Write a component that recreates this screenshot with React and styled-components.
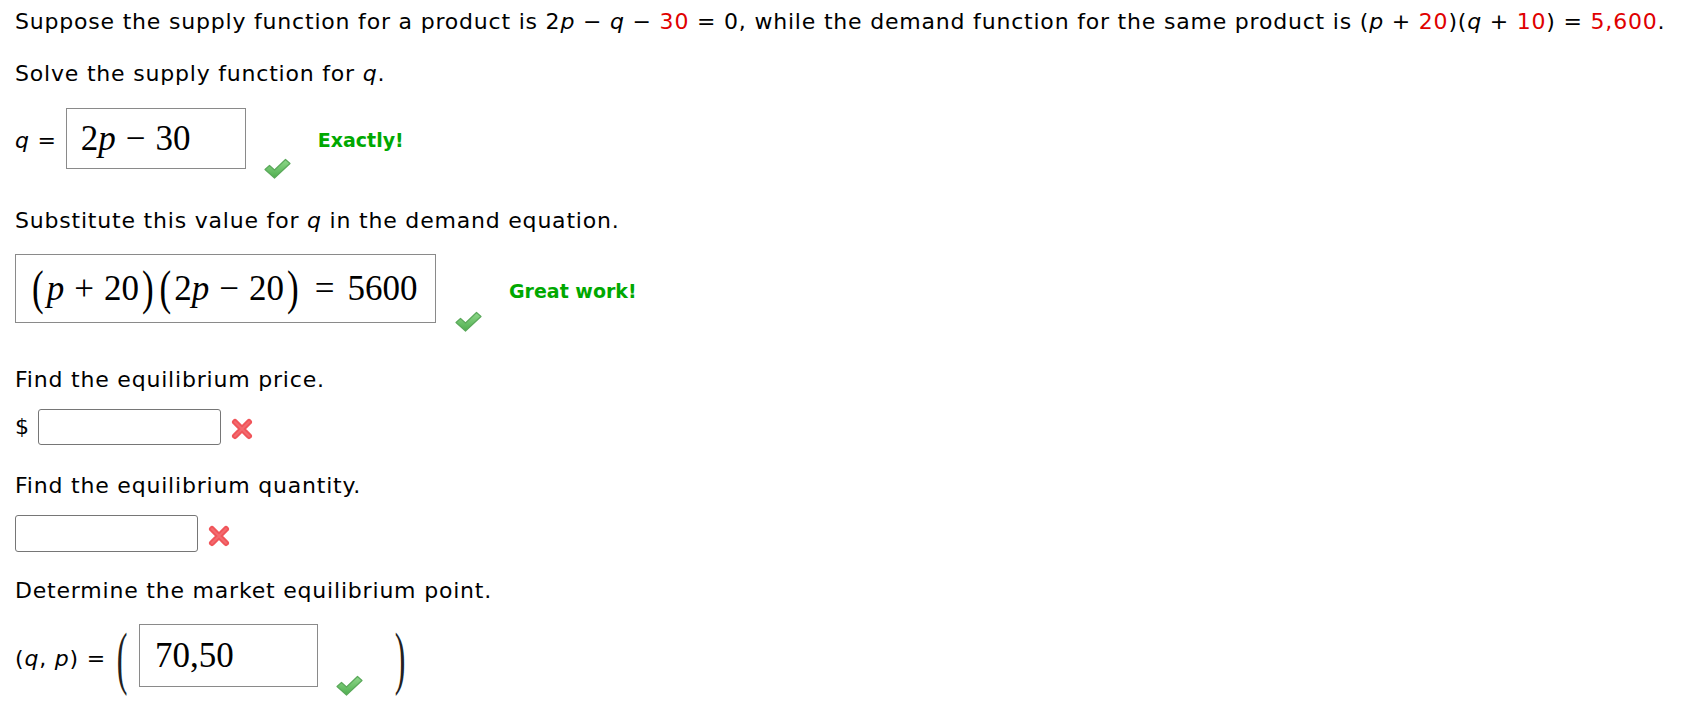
import React from 'react';
import styled, { createGlobalStyle } from 'styled-components';

const GlobalStyle = createGlobalStyle`
    html, body {
        margin:0;
        padding:0;
        background:#fff;
    }
    body {
        font-family:"DejaVu Sans", Verdana, sans-serif;
        color:#000;
    }
`;

const Page = styled.div`
    width:1704px;
    height:716px;
    padding:9px 15px 0;
    box-sizing:border-box;
    overflow:hidden;
`;

const Para = styled.div`
    font-size:22px;
    letter-spacing:0.8px;
    line-height:26px;
    margin-top:${p => p.$top || 0}px;
    white-space:nowrap;
`;

const Red = styled.span`
    color:#e00000;
`;

const Var = styled.i`
    font-style:italic;
`;

const Row = styled.div`
    display:flex;
    align-items:flex-start;
    height:${p => p.$h}px;
    margin-top:${p => p.$top || 0}px;
`;

const Label = styled.span`
    font-size:22px;
    letter-spacing:0.8px;
    line-height:26px;
    margin-top:${p => p.$top || 0}px;
    margin-right:${p => p.$gap || 0}px;
    white-space:nowrap;
`;

const MathBox = styled.div`
    width:${p => p.$w}px;
    height:${p => p.$h}px;
    flex-shrink:0;
    box-sizing:border-box;
    border:1px solid #8a8a8a;
    padding:0 ${p => p.$pad || 14}px;
    display:flex;
    align-items:center;
    font-family:"Liberation Serif", "DejaVu Serif", serif;
    font-size:35px;
    white-space:nowrap;
`;

const MathVar = styled.span`
    font-style:italic;
`;

const Op = styled.span`
    padding:0 ${p => p.$sp || 10}px;
`;

const Delim = styled.span`
    display:inline-block;
    padding:0 3px;
    transform:scaleY(1.4);
`;

const Icon = styled.span`
    display:inline-flex;
    flex-shrink:0;
    margin-top:${p => p.$top || 0}px;
    margin-left:${p => p.$left || 0}px;
`;

const Feedback = styled.span`
    color:#00a800;
    font-weight:bold;
    font-size:19px;
    line-height:26px;
    white-space:nowrap;
    margin-top:${p => p.$top || 0}px;
    margin-left:${p => p.$left || 0}px;
`;

const Input = styled.div`
    width:${p => p.$w}px;
    height:${p => p.$h}px;
    flex-shrink:0;
    box-sizing:border-box;
    border:1px solid #767676;
    border-radius:3px;
    background:#fff;
`;

const BigParen = styled.span`
    display:inline-block;
    flex-shrink:0;
    width:16px;
    text-align:center;
    font-family:"Liberation Serif", serif;
    font-size:40px;
    line-height:40px;
    color:#222;
    transform:scale(0.8, 1.75);
    transform-origin:center top;
    margin-top:${p => p.$top || 0}px;
    margin-left:${p => p.$left || 0}px;
    margin-right:${p => p.$right || 0}px;
`;

const Check = ({ id, top, left }) => (
    <Icon $top={top} $left={left}>
        <svg width="29" height="23" viewBox="0 0 29 23">
            <defs>
                <linearGradient id={id} x1="0" y1="0" x2="0" y2="1">
                    <stop offset="0" stopColor="#8fd88a" />
                    <stop offset="1" stopColor="#4fae4f" />
                </linearGradient>
            </defs>
            <path
                d="M2 12.5 L6.5 8.5 L11.5 13 L22.5 2.5 L27 6.5 L11.5 21 Z"
                fill={`url(#${id})`}
                stroke="#5aa85a"
                strokeWidth="1.2"
                strokeLinejoin="round"
            />
        </svg>
    </Icon>
);

const Cross = ({ top, left }) => (
    <Icon $top={top} $left={left}>
        <svg width="24" height="24" viewBox="0 0 24 24">
            <path d="M5 5 L19 19 M19 5 L5 19" stroke="#f0555a" strokeWidth="6" strokeLinecap="round" />
            <path d="M5 5 L19 19 M19 5 L5 19" stroke="#f57a7e" strokeWidth="2" strokeLinecap="round" opacity="0.6" />
        </svg>
    </Icon>
);

const App = () => {
    return (
        <Page>
            <GlobalStyle />
            <Para>
                Suppose the supply function for a product is 2<Var>p</Var> − <Var>q</Var> − <Red>30</Red> = 0, while the demand function for the same product is (<Var>p</Var> + <Red>20</Red>)(<Var>q</Var> + <Red>10</Red>) = <Red>5,600</Red>.
            </Para>
            <Para $top={26}>
                Solve the supply function for <Var>q</Var>.
            </Para>

            <Row $top={21} $h={61}>
                <Label $top={20} $gap={9}><Var>q</Var> =</Label>
                <MathBox $w={180} $h={61}>
                    2<MathVar>p</MathVar><Op>−</Op>30
                </MathBox>
                <Check id="ck1" top={49} left={17} />
                <Feedback $top={19} $left={26}>Exactly!</Feedback>
            </Row>

            <Para $top={39}>
                Substitute this value for <Var>q</Var> in the demand equation.
            </Para>

            <Row $top={20} $h={69}>
                <MathBox $w={421} $h={69} $pad={13}>
                    <Delim>(</Delim><MathVar>p</MathVar><Op>+</Op>20<Delim>)</Delim>
                    <Delim>(</Delim>2<MathVar>p</MathVar><Op>−</Op>20<Delim>)</Delim>
                    <Op $sp={13}>=</Op>5600
                </MathBox>
                <Check id="ck2" top={56} left={18} />
                <Feedback $top={24} $left={26}>Great work!</Feedback>
            </Row>

            <Para $top={44}>Find the equilibrium price.</Para>
            <Row $top={16} $h={36}>
                <Label $top={5} $gap={8}>$</Label>
                <Input $w={183} $h={36} />
                <Cross top={8} left={9} />
            </Row>

            <Para $top={28}>Find the equilibrium quantity.</Para>
            <Row $top={16} $h={37}>
                <Input $w={183} $h={37} />
                <Cross top={9} left={9} />
            </Row>

            <Para $top={26}>Determine the market equilibrium point.</Para>
            <Row $top={20} $h={63}>
                <Label $top={22} $gap={8}>(<Var>q</Var>, <Var>p</Var>) =</Label>
                <BigParen $top={-1} $right={9}>(</BigParen>
                <MathBox $w={179} $h={63} $pad={15}>70,50</MathBox>
                <Check id="ck3" top={50} left={17} />
                <BigParen $top={-1} $left={28}>)</BigParen>
            </Row>
        </Page>
    );
};

export default App;
